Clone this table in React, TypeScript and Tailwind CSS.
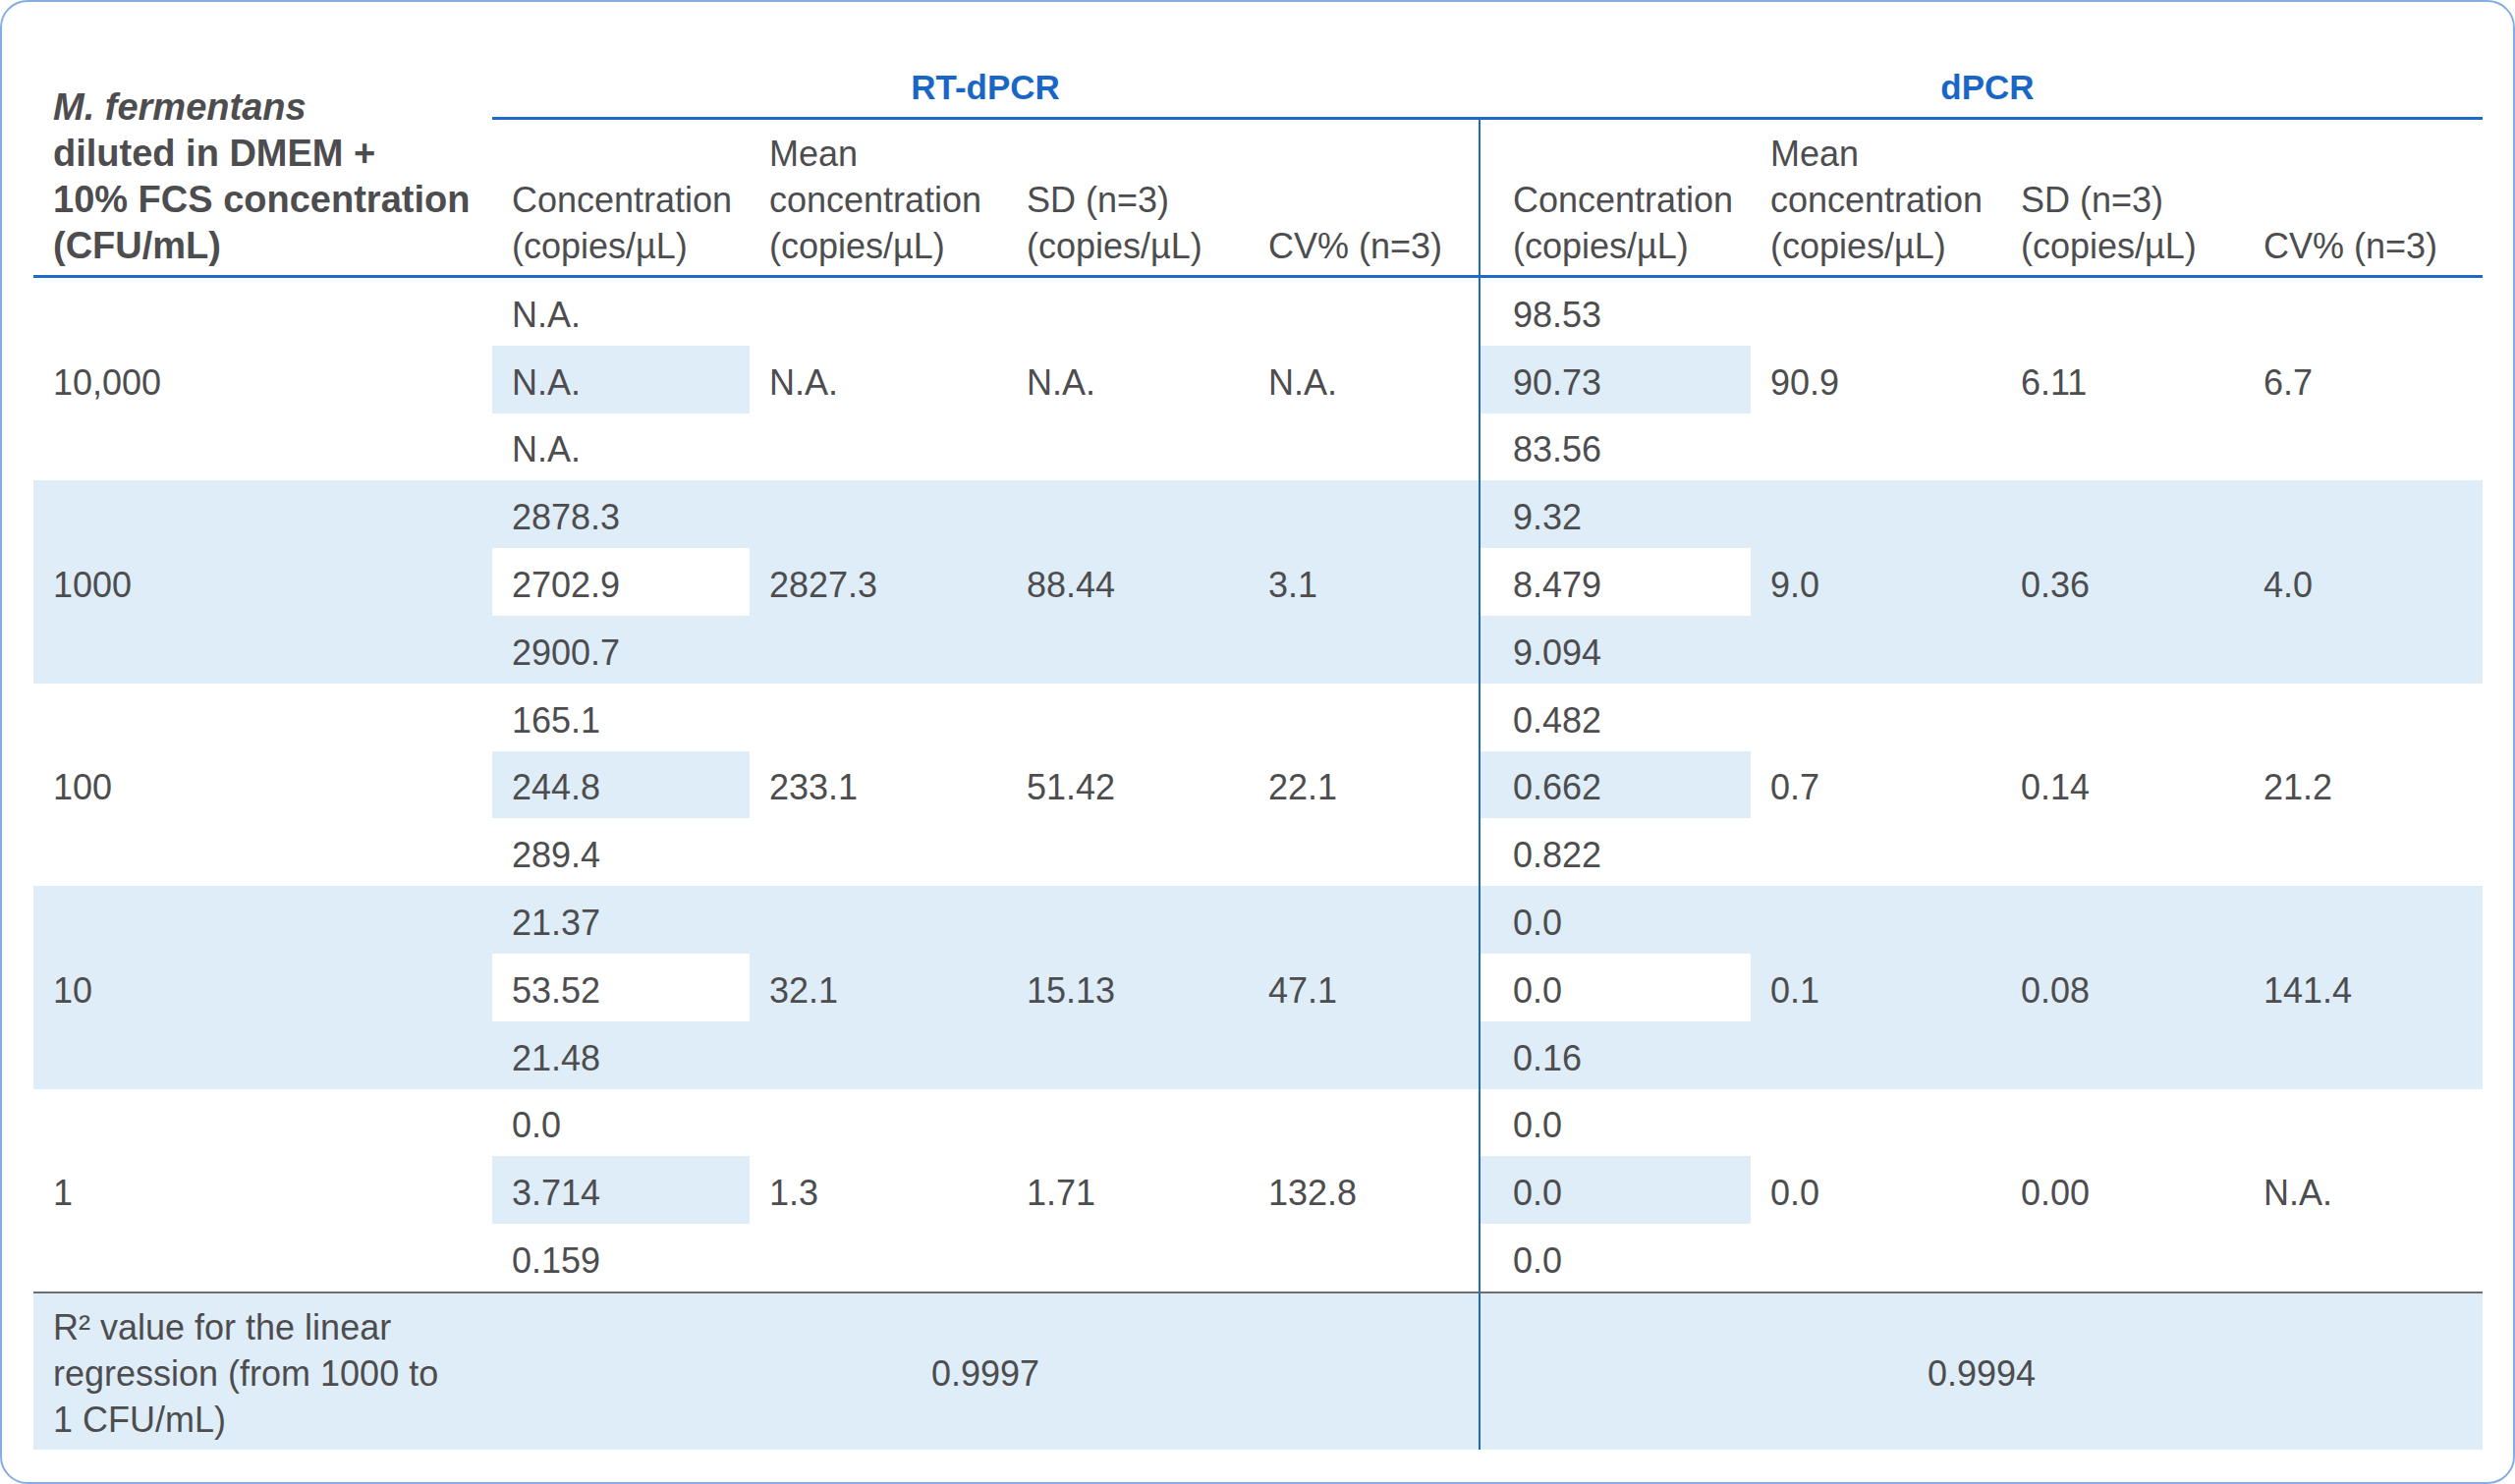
import React from "react";

const BLUE_BG = "bg-[#dfedf9]";

type Group = {
  label: string;
  rt: [string, string, string];
  rtMean: string;
  rtSd: string;
  rtCv: string;
  d: [string, string, string];
  dMean: string;
  dSd: string;
  dCv: string;
};

const groups: Group[] = [
  { label: "10,000", rt: ["N.A.", "N.A.", "N.A."], rtMean: "N.A.", rtSd: "N.A.", rtCv: "N.A.", d: ["98.53", "90.73", "83.56"], dMean: "90.9", dSd: "6.11", dCv: "6.7" },
  { label: "1000", rt: ["2878.3", "2702.9", "2900.7"], rtMean: "2827.3", rtSd: "88.44", rtCv: "3.1", d: ["9.32", "8.479", "9.094"], dMean: "9.0", dSd: "0.36", dCv: "4.0" },
  { label: "100", rt: ["165.1", "244.8", "289.4"], rtMean: "233.1", rtSd: "51.42", rtCv: "22.1", d: ["0.482", "0.662", "0.822"], dMean: "0.7", dSd: "0.14", dCv: "21.2" },
  { label: "10", rt: ["21.37", "53.52", "21.48"], rtMean: "32.1", rtSd: "15.13", rtCv: "47.1", d: ["0.0", "0.0", "0.16"], dMean: "0.1", dSd: "0.08", dCv: "141.4" },
  { label: "1", rt: ["0.0", "3.714", "0.159"], rtMean: "1.3", rtSd: "1.71", rtCv: "132.8", d: ["0.0", "0.0", "0.0"], dMean: "0.0", dSd: "0.00", dCv: "N.A." },
];

export default function App() {
  const font = { fontFamily: '"Liberation Sans", Arial, sans-serif' };
  const hdr = "flex items-end pb-[6px] border-b-[3px] border-[#1d6bc6] text-[36px] leading-[47px] text-[#4d4d4f]";
  const cell = "flex items-center pt-[6px] text-[36px] leading-[47px] text-[#4d4d4f] whitespace-nowrap";
  return (
    <div className="w-[2560px] h-[1511px] bg-white" style={font}>
      <div className="w-full h-full border-2 border-[#85ade2] rounded-[28px] pl-[32px]">
        <div className="grid grid-cols-[467px_262px_261px_249px_232px_277px_254px_248px_243px] grid-rows-[120px_161px_repeat(15,68.8px)_161px]">
          {/* first column header */}
          <div className="row-span-2 flex items-end pb-[6px] pl-[20px] border-b-[3px] border-[#1d6bc6] text-[38px] leading-[47px] font-bold text-[#4d4d4f]">
            <div>
              <span className="italic">M. fermentans</span>
              <br />
              diluted in DMEM +
              <br />
              10% FCS concentration
              <br />
              (CFU/mL)
            </div>
          </div>
          <div className="col-span-4 flex items-end justify-center pb-[7px] border-b-[3px] border-[#1d6bc6] text-[35px] leading-[47px] font-bold text-[#1a66c6]">
            RT-dPCR
          </div>
          <div className="col-span-4 flex items-end justify-center pb-[7px] pl-[14px] border-b-[3px] border-[#1d6bc6] text-[35px] leading-[47px] font-bold text-[#1a66c6]">
            dPCR
          </div>

          {/* sub headers */}
          <div className={`${hdr} pl-[20px]`}>
            <div>Concentration<br />(copies/µL)</div>
          </div>
          <div className={`${hdr} pl-[20px]`}>
            <div>Mean<br />concentration<br />(copies/µL)</div>
          </div>
          <div className={`${hdr} pl-[21px]`}>
            <div>SD (n=3)<br />(copies/µL)</div>
          </div>
          <div className={`${hdr} pl-[18px]`}>
            <div>CV% (n=3)</div>
          </div>
          <div className={`${hdr} pl-[33px] border-l-2 border-l-[#1d6bc6]`}>
            <div>Concentration<br />(copies/µL)</div>
          </div>
          <div className={`${hdr} pl-[20px]`}>
            <div>Mean<br />concentration<br />(copies/µL)</div>
          </div>
          <div className={`${hdr} pl-[21px]`}>
            <div>SD (n=3)<br />(copies/µL)</div>
          </div>
          <div className={`${hdr} pl-[20px]`}>
            <div>CV% (n=3)</div>
          </div>

          {/* data groups */}
          {groups.map((g, gi) => {
            const shaded = gi % 2 === 1;
            const bg = shaded ? BLUE_BG : "bg-white";
            const mid = shaded ? "bg-white" : BLUE_BG;
            return (
              <React.Fragment key={g.label}>
                <div className={`${cell} ${bg} row-span-3 pl-[20px]`}>{g.label}</div>
                <div className={`${cell} ${bg} pl-[20px]`}>{g.rt[0]}</div>
                <div className={`${cell} ${bg} row-span-3 pl-[20px]`}>{g.rtMean}</div>
                <div className={`${cell} ${bg} row-span-3 pl-[21px]`}>{g.rtSd}</div>
                <div className={`${cell} ${bg} row-span-3 pl-[18px]`}>{g.rtCv}</div>
                <div className={`${cell} ${bg} pl-[33px] border-l-2 border-[#1d6bc6]`}>{g.d[0]}</div>
                <div className={`${cell} ${bg} row-span-3 pl-[20px]`}>{g.dMean}</div>
                <div className={`${cell} ${bg} row-span-3 pl-[21px]`}>{g.dSd}</div>
                <div className={`${cell} ${bg} row-span-3 pl-[20px]`}>{g.dCv}</div>

                <div className={`${cell} ${mid} col-start-2 pl-[20px]`}>{g.rt[1]}</div>
                <div className={`${cell} ${mid} col-start-6 pl-[33px] border-l-2 border-[#1d6bc6]`}>{g.d[1]}</div>

                <div className={`${cell} ${bg} col-start-2 pl-[20px]`}>{g.rt[2]}</div>
                <div className={`${cell} ${bg} col-start-6 pl-[33px] border-l-2 border-[#1d6bc6]`}>{g.d[2]}</div>
              </React.Fragment>
            );
          })}

          {/* footer */}
          <div className={`flex items-center pt-[5px] pl-[20px] ${BLUE_BG} border-t-2 border-[#6d6e70] text-[36px] leading-[47px] text-[#4d4d4f]`}>
            <div>
              R² value for the linear
              <br />
              regression (from 1000 to
              <br />1 CFU/mL)
            </div>
          </div>
          <div className={`col-span-4 flex items-center justify-center pt-[5px] ${BLUE_BG} border-t-2 border-[#6d6e70] text-[36px] leading-[47px] text-[#4d4d4f]`}>
            0.9997
          </div>
          <div className={`col-span-4 flex items-center justify-center pt-[5px] ${BLUE_BG} border-t-2 border-t-[#6d6e70] border-l-2 border-l-[#1d6bc6] text-[36px] leading-[47px] text-[#4d4d4f]`}>
            0.9994
          </div>
        </div>
      </div>
    </div>
  );
}
